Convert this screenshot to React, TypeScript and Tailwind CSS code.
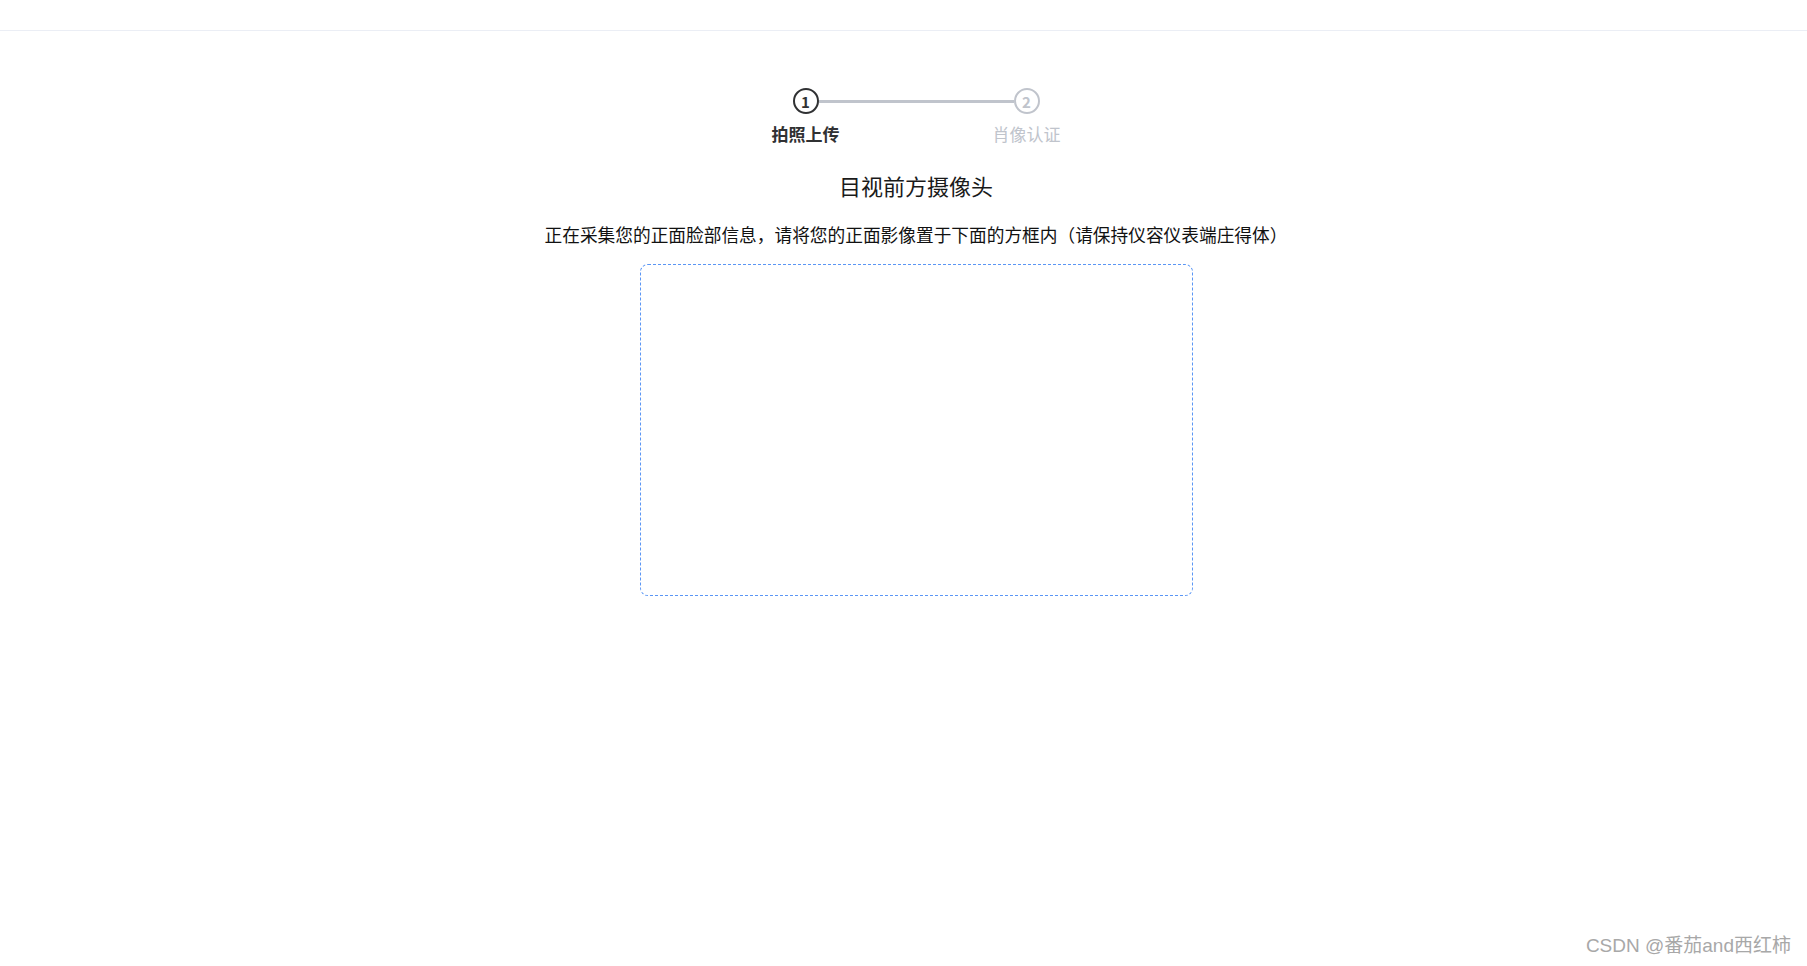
import React from 'react'

const cjk = { fontFamily: '"Noto Sans CJK SC", "Noto Sans", sans-serif' }

const StepCircle = ({ n, active }: { n: number; active: boolean }) => (
    <div className={`flex items-center justify-center w-[26px] h-[26px] rounded-full border-2 text-[15px] font-bold leading-none ${active ? 'border-[#303133] text-[#303133]' : 'border-[#c0c4cc] text-[#c0c4cc]'}`}>
        {n}
    </div>
)

export default function App() {
    return (
        <div className="relative min-h-screen bg-white" style={cjk}>
            {/* header strip */}
            <div className="h-[31px] border-b border-[#ebeef5]"></div>

            <div className="flex flex-col items-center pl-[25px]">
                {/* steps */}
                <div className="flex items-center mt-[57px]">
                    <StepCircle n={1} active={true} />
                    <div className="w-[195px] h-[3px] bg-[#c0c4cc]"></div>
                    <StepCircle n={2} active={false} />
                </div>
                <div className="flex gap-[121px] mt-[5px]">
                    <div className="w-[100px] text-center text-[17px] leading-[30px] font-bold text-[#303133]">拍照上传</div>
                    <div className="w-[100px] text-center text-[17px] leading-[30px] text-[#c0c4cc]">肖像认证</div>
                </div>

                <div className="mt-[20px] text-[22px] leading-[32px] text-[#1a1a1a]">目视前方摄像头</div>
                <div className="mt-[20px] text-[17.7px] leading-[26px] text-[#111]">
                    正在采集您的正面脸部信息，请将您的正面影像置于下面的方框内（请保持仪容仪表端庄得体）
                </div>

                <div className="mt-[17px] w-[553px] h-[332px] border border-dashed border-[#5a96f5] rounded-[8px]"></div>
            </div>

            <div className="absolute right-[16px] bottom-[6px] text-[19px] text-[#a8a8a8]" style={{ fontFamily: '"Liberation Sans", "Noto Sans CJK SC", sans-serif' }}>
                CSDN @番茄and西红柿
            </div>
        </div>
    )
}
